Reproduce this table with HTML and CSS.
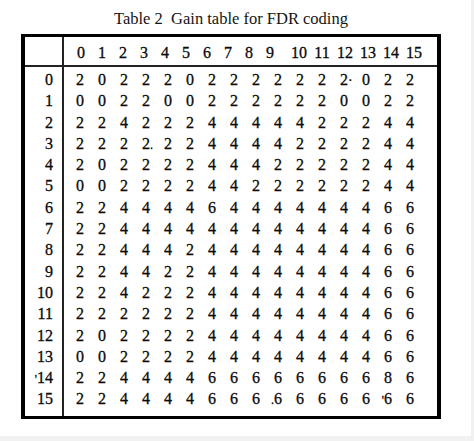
FILE: index.html
```html
<!DOCTYPE html>
<html>
<head>
<meta charset="utf-8">
<link rel="stylesheet" href="styles.css">
</head>
<body>
<div class="page">
  <div class="figure">
    <div class="caption">Table 2&nbsp; Gain table for FDR coding</div>
    <div class="table">
      <div class="corner"></div>
      <div class="head">
        <div class="grp single"><span>0</span><span>1</span><span>2</span><span>3</span><span>4</span><span>5</span><span>6</span><span>7</span><span>8</span><span>9</span></div>
        <div class="grp double"><span>10</span><span>11</span><span>12</span><span>13</span><span>14</span><span>15</span></div>
      </div>
      <div class="labels">
        <div>0</div><div>1</div><div>2</div><div>3</div><div>4</div><div>5</div><div>6</div><div>7</div>
        <div>8</div><div>9</div><div>10</div><div>11</div><div>12</div><div>13</div><div><span class="pre">'</span>14</div><div>15</div>
      </div>
      <div class="cells">
        <div class="row"><span>2</span><span>0</span><span>2</span><span>2</span><span>2</span><span>0</span><span>2</span><span>2</span><span>2</span><span>2</span><span>2</span><span>2</span><span>2<span class="post mid">·</span></span><span>0</span><span>2</span><span>2</span></div>
        <div class="row"><span>0</span><span>0</span><span>2</span><span>2</span><span>0</span><span>0</span><span>2</span><span>2</span><span>2</span><span>2</span><span>2</span><span>2</span><span>0</span><span>0</span><span>2</span><span>2</span></div>
        <div class="row"><span>2</span><span>2</span><span>4</span><span>2</span><span>2</span><span>2</span><span>4</span><span>4</span><span>4</span><span>4</span><span>4</span><span>2</span><span>2</span><span>2</span><span>4</span><span>4</span></div>
        <div class="row"><span>2</span><span>2</span><span>2</span><span>2<span class="post">.</span></span><span>2</span><span>2</span><span>4</span><span>4</span><span>4</span><span>4</span><span>2</span><span>2</span><span>2</span><span>2</span><span>4</span><span>4</span></div>
        <div class="row"><span>2</span><span>0</span><span>2</span><span>2</span><span>2</span><span>2</span><span>4</span><span>4</span><span>4</span><span>2</span><span>2</span><span>2</span><span>2</span><span>2</span><span>4</span><span>4</span></div>
        <div class="row"><span>0</span><span>0</span><span>2</span><span>2</span><span>2</span><span>2</span><span>4</span><span>4</span><span>2</span><span>2</span><span>2</span><span>2</span><span>2</span><span>2</span><span>4</span><span>4</span></div>
        <div class="row"><span>2</span><span>2</span><span>4</span><span>4</span><span>4</span><span>4</span><span>6</span><span>4</span><span>4</span><span>4</span><span>4</span><span>4</span><span>4</span><span>4</span><span>6</span><span>6</span></div>
        <div class="row"><span>2</span><span>2</span><span>4</span><span>4</span><span>4</span><span>4</span><span>4</span><span>4</span><span>4</span><span>4</span><span>4</span><span>4</span><span>4</span><span>4</span><span>6</span><span>6</span></div>
        <div class="row"><span>2</span><span>2</span><span>4</span><span>4</span><span>4</span><span>2</span><span>4</span><span>4</span><span>4</span><span>4</span><span>4</span><span>4</span><span>4</span><span>4</span><span>6</span><span>6</span></div>
        <div class="row"><span>2</span><span>2</span><span>4</span><span>4</span><span>2</span><span>2</span><span>4</span><span>4</span><span>4</span><span>4</span><span>4</span><span>4</span><span>4</span><span>4</span><span>6</span><span>6</span></div>
        <div class="row"><span>2</span><span>2</span><span>4</span><span>2</span><span>2</span><span>2</span><span>4</span><span>4</span><span>4</span><span>4</span><span>4</span><span>4</span><span>4</span><span>4</span><span>6</span><span>6</span></div>
        <div class="row"><span>2</span><span>2</span><span>2</span><span>2</span><span>2</span><span>2</span><span>4</span><span>4</span><span>4</span><span>4</span><span>4</span><span>4</span><span>4</span><span>4</span><span>6</span><span>6</span></div>
        <div class="row"><span>2</span><span>0</span><span>2</span><span>2</span><span>2</span><span>2</span><span>4</span><span>4</span><span>4</span><span>4</span><span>4</span><span>4</span><span>4</span><span>4</span><span>6</span><span>6</span></div>
        <div class="row"><span>0</span><span>0</span><span>2</span><span>2</span><span>2</span><span>2</span><span>4</span><span>4</span><span>4</span><span>4</span><span>4</span><span>4</span><span>4</span><span>4</span><span>6</span><span>6</span></div>
        <div class="row"><span>2</span><span>2</span><span>4</span><span>4</span><span>4</span><span>4</span><span>6</span><span>6</span><span>6</span><span>6</span><span>6</span><span>6</span><span>6</span><span>6</span><span>8</span><span>6</span></div>
        <div class="row"><span>2</span><span>2</span><span>4</span><span>4</span><span>4</span><span>4</span><span>6</span><span>6</span><span>6</span><span><span class="pre">.</span>6</span><span>6</span><span>6</span><span>6</span><span>6</span><span><span class="pre">'</span>6</span><span>6</span></div>
      </div>
    </div>
  </div>
</div>
</body>
</html>
```

FILE: styles.css
```css
html, body {
  margin: 0;
  padding: 0;
  background: #f1f1f1;
}

.page {
  width: 471px;
  height: 436px;
  background: #ffffff;
  font-family: "Liberation Serif", "Times New Roman", serif;
  color: #111;
  overflow: hidden;
}

.figure {
  margin-left: 21px;
  width: 420px;
}

.caption {
  padding-top: 9px;
  height: 20px;
  margin-bottom: 5px;
  line-height: 20px;
  font-size: 16.5px;
  text-align: center;
  color: #151515;
}

.table {
  box-sizing: border-box;
  width: 420px;
  height: 385px;
  border-top: 3px solid #000;
  border-left: 4px solid #000;
  border-right: 4px solid #000;
  border-bottom: 3px solid #000;
  display: grid;
  grid-template-columns: 39px 1fr;
  grid-template-rows: 30px 1fr;
  font-size: 16px;
  color: #0a0a0a;
  -webkit-text-stroke: 0.3px #0a0a0a;
}

.corner {
  border-right: 2px solid #222;
  border-bottom: 2px solid #222;
}

.head {
  border-bottom: 2px solid #222;
  display: flex;
  gap: 17px;
  padding-left: 13px;
  padding-top: 4px;
  line-height: 24px;
}

.grp {
  display: flex;
}

.grp span {
  text-align: center;
}

.single {
  gap: 13px;
}

.single span {
  width: 8px;
}

.double {
  gap: 7px;
}

.double span {
  width: 16px;
}

.labels {
  border-right: 2px solid #222;
  padding-top: 2px;
  padding-right: 9px;
  text-align: right;
}

.labels div,
.row {
  height: 21.3px;
  line-height: 21.3px;
}

.cells {
  padding-top: 2px;
  padding-left: 5px;
}

.row {
  display: grid;
  grid-template-columns: repeat(16, 22px);
}

.row span {
  text-align: center;
}

.post,
.pre {
  display: inline-block;
  width: 0;
  font-size: 12px;
}

.pre {
  direction: rtl;
}

.mid {
  font-size: 14px;
}
```
